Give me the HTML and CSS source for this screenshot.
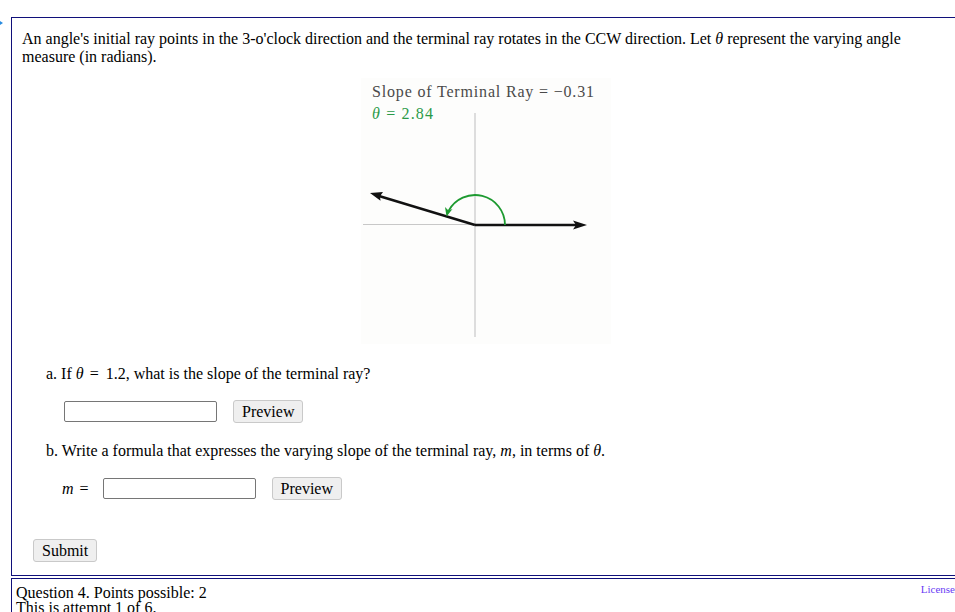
FILE: index.html
```html
<!DOCTYPE html>
<html>
<head>
<meta charset="utf-8">
<title>Question</title>
<link rel="stylesheet" href="styles.css">
</head>
<body>
<div class="page">
  <div class="row">
    <div class="gutter"><span class="marker"></span></div>
    <div class="qbox">
      <p class="intro">An angle's initial ray points in the 3-o'clock direction and the terminal ray rotates in the CCW direction. Let <i class="mvar">θ</i> represent the varying angle measure (in radians).</p>
      <div class="figure">
        <svg class="graph" width="250" height="266" viewBox="0 0 250 266">
          <rect x="0" y="0" width="250" height="266" fill="#fdfdfc"/>
          <text x="11" y="19" class="gtitle" textLength="222">Slope of Terminal Ray = −0.31</text>
          <text x="11" y="41" class="gtheta" textLength="61"><tspan font-style="italic">θ</tspan> = 2.84</text>
          <line x1="114" y1="35" x2="114" y2="259" stroke="#c8c8c8" stroke-width="1.2"/>
          <line x1="2" y1="146.5" x2="224" y2="146.5" stroke="#c8c8c8" stroke-width="1.2"/>
          <line x1="114" y1="147" x2="216" y2="147" stroke="#111" stroke-width="2.4"/>
          <polygon points="226,147 212,142.5 215,147 212,151.5" fill="#111"/>
          <line x1="114" y1="147" x2="18" y2="118" stroke="#111" stroke-width="2.4"/>
          <polygon points="9,115 22,114 19,118.3 19.5,122.8" fill="#111"/>
          <path d="M144 147 A30 30 0 0 0 87.5 133" fill="none" stroke="#1d9a30" stroke-width="1.8"/>
          <polygon points="85.5,138.5 84,129 87.5,132.5 91.5,131" fill="#1d9a30"/>
        </svg>
      </div>
      <p class="part part-a">a. If <i class="mvar">θ</i><span class="mop">=</span>1.2, what is the slope of the terminal ray?</p>
      <div class="answer">
        <input class="field" type="text">
        <button class="btn" type="button">Preview</button>
      </div>
      <p class="part part-b">b. Write a formula that expresses the varying slope of the terminal ray, <i class="mvar">m</i>, in terms of <i class="mvar">θ</i>.</p>
      <div class="answer answer-m">
        <span class="mlabel"><i class="mvar">m</i><span class="mop">=</span></span>
        <input class="field" type="text">
        <button class="btn" type="button">Preview</button>
      </div>
      <div class="submit-row">
        <button class="btn" type="button">Submit</button>
      </div>
    </div>
  </div>
  <div class="row">
    <div class="gutter"></div>
    <div class="infobox">
      <div class="info">
        <div>Question 4. Points possible: 2</div>
        <div>This is attempt 1 of 6.</div>
      </div>
      <a class="license" href="#">License</a>
    </div>
  </div>
</div>
</body>
</html>
```
FILE: styles.css
```css
html, body {
  margin: 0;
  padding: 0;
  background: #fff;
  overflow: hidden;
}
body {
  font-family: "Liberation Serif", "Times New Roman", serif;
  font-size: 16px;
  color: #000;
}
.page {
  padding-top: 17px;
  width: 980px;
}
.row {
  display: flex;
}
.gutter {
  width: 11px;
  flex: 0 0 11px;
}
.marker {
  display: block;
  margin-top: 4px;
  width: 0;
  height: 0;
  border-top: 2px solid transparent;
  border-bottom: 2px solid transparent;
  border-left: 3px solid #2a8ce0;
}
.qbox {
  border: 1px solid #10107a;
  width: 960px;
  padding: 12px 0 13px 10px;
  box-sizing: border-box;
}
.intro {
  margin: 0;
  width: 880px;
  line-height: 18px;
}
.mvar {
  font-style: italic;
}
.mop {
  display: inline-block;
  margin: 0 7px 0 6px;
}
.figure {
  display: flex;
  padding-left: 339px;
  margin-top: 12px;
}
.graph {
  display: block;
}
.gtitle {
  font-family: "Liberation Serif", serif;
  font-size: 16px;
  fill: #4a4a4a;
}
.gtheta {
  font-family: "Liberation Serif", serif;
  font-size: 16px;
  fill: #2a9a48;
}
.part {
  margin: 0 0 0 24px;
  line-height: 18px;
}
.part-a {
  margin-top: 21px;
}
.part-b {
  margin-top: 19px;
}
.answer {
  display: flex;
  align-items: center;
  gap: 16px;
  margin: 17px 0 0 42px;
}
.answer-m {
  margin-left: 40px;
  gap: 16px;
}
.mlabel {
  margin-right: -9px;
}
.field {
  width: 153px;
  height: 21px;
  box-sizing: border-box;
  border: 1px solid #767676;
  border-radius: 2px;
  padding: 1px 2px;
  font: inherit;
  background: #fff;
}
.btn {
  font-family: "Liberation Serif", "Times New Roman", serif;
  font-size: 16px;
  color: #000;
  background: #efefef;
  border: 1px solid #c9c9c9;
  border-radius: 3px;
  height: 23px;
  padding: 0 8px;
  line-height: 20px;
}
.submit-row {
  margin: 39px 0 0 11px;
}
.infobox {
  margin-top: 2px;
  border-left: 1px solid #10107a;
  border-top: 1px solid #10107a;
  width: 944px;
  display: flex;
  justify-content: space-between;
  padding: 6px 0 0 4px;
  box-sizing: border-box;
}
.info {
  line-height: 15px;
}
.license {
  font-size: 11px;
  color: #6a3cf5;
  text-decoration: none;
  margin-top: -2px;
}
```
